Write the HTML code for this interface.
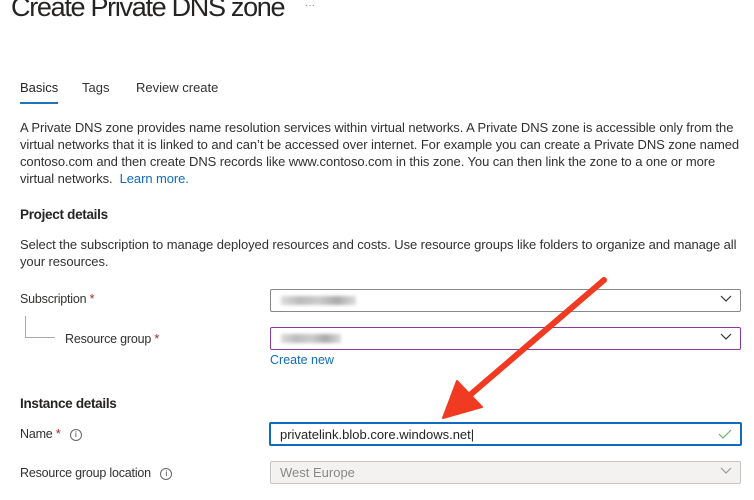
<!DOCTYPE html>
<html><head><style>
body{margin:0;width:754px;height:500px;background:#fff;font-family:"Liberation Sans",sans-serif;color:#323130;position:relative;overflow:hidden}
.a{position:absolute;white-space:nowrap}
.p{font-size:13px;letter-spacing:-0.08px;line-height:17px}
.lbl{font-size:12.5px;letter-spacing:-0.2px}
.box{position:absolute;left:270px;width:469px;height:21px;border:1px solid #8a8886;border-radius:2px;box-sizing:content-box}
.chev{position:absolute;right:8px;top:5px}
.blur{position:absolute;left:10px;top:6px;height:9px;background:linear-gradient(90deg,#ddd,#bbb,#ccc,#aaa,#ddd);filter:blur(1.5px)}
</style></head><body>
<div class="a" style="left:11px;top:-8px;font-size:27px;color:#252423;letter-spacing:-1.3px">Create Private DNS zone</div>
<div class="a" style="left:305px;top:0px;font-size:10px;color:#888">···</div>
<div class="a" style="left:20px;top:80px;font-size:13px;color:#252423">Basics</div>
<div class="a" style="left:82px;top:80px;font-size:13px">Tags</div>
<div class="a" style="left:136px;top:80px;font-size:13px">Review create</div>
<div style="position:absolute;left:20px;top:102px;width:38px;height:2px;background:#1f73b7"></div>
<div class="a p" style="left:20px;top:119px">A Private DNS zone provides name resolution services within virtual networks. A Private DNS zone is accessible only from the<br>virtual networks that it is linked to and can’t be accessed over internet. For example you can create a Private DNS zone named<br>contoso.com and then create DNS records like www.contoso.com in this zone. You can then link the zone to a one or more<br>virtual networks. &nbsp;<span style="color:#0f6cbd">Learn more.</span></div>
<div class="a" style="left:20px;top:207px;font-size:13.5px;font-weight:bold;color:#252423;letter-spacing:-0.3px">Project details</div>
<div class="a p" style="left:20px;top:236px">Select the subscription to manage deployed resources and costs. Use resource groups like folders to organize and manage all<br>your resources.</div>
<div class="a lbl" style="left:20px;top:292px">Subscription <span style="color:#a4262c">*</span></div>
<div style="position:absolute;left:25px;top:316px;width:1px;height:21px;background:#aaa"></div>
<div style="position:absolute;left:25px;top:337px;width:30px;height:1px;background:#aaa"></div>
<div class="a lbl" style="left:65px;top:332px">Resource group <span style="color:#a4262c">*</span></div>
<div class="box" style="top:289px"><div class="blur" style="width:75px"></div><svg class="chev" width="12" height="8"><path d="M1 1l5 5 5-5" fill="none" stroke="#333" stroke-width="1.2"/></svg></div>
<div class="box" style="top:327px;border-color:#8a3c9c"><div class="blur" style="width:60px"></div><svg class="chev" width="12" height="8"><path d="M1 1l5 5 5-5" fill="none" stroke="#333" stroke-width="1.2"/></svg></div>
<div class="a" style="left:270px;top:353px;font-size:12.5px;color:#0f6cbd">Create new</div>
<div class="a" style="left:20px;top:396px;font-size:13.5px;font-weight:bold;color:#252423;letter-spacing:-0.3px">Instance details</div>
<div class="a lbl" style="left:20px;top:427px">Name <span style="color:#a4262c">*</span> <span style="display:inline-block;width:10px;height:10px;border:1px solid #666;border-radius:50%;font-size:8px;text-align:center;line-height:10px;margin-left:6px;vertical-align:middle">i</span></div>
<div class="box" style="top:422px;border:2px solid #0f6cbd;left:269px;width:469px;height:20px"><div class="a" style="left:9px;top:3px;font-size:13px;color:#252423">privatelink.blob.core.windows.net|</div><svg class="chev" width="14" height="10" style="top:5px"><path d="M1 5l4 4 8-8" fill="none" stroke="#6bb36b" stroke-width="1.2"/></svg></div>
<div class="a lbl" style="left:20px;top:466px">Resource group location <span style="display:inline-block;width:10px;height:10px;border:1px solid #666;border-radius:50%;font-size:8px;text-align:center;line-height:10px;margin-left:6px;vertical-align:middle">i</span></div>
<div class="box" style="top:461px;background:#f3f2f1;border-color:#c8c6c4"><div class="a" style="left:9px;top:3px;font-size:13px;color:#8a8886">West Europe</div><svg class="chev" width="12" height="8"><path d="M1 1l5 5 5-5" fill="none" stroke="#999" stroke-width="1.2"/></svg></div>
<svg style="position:absolute;left:0;top:0" width="754" height="500">
<path d="M604 280 L470 395" stroke="#f03a22" stroke-width="6" stroke-linecap="round"/>
<path d="M443 418 L457 381 L482 407 Z" fill="#f03a22" stroke="#f03a22" stroke-width="2" stroke-linejoin="round"/>
</svg>
</body></html>
